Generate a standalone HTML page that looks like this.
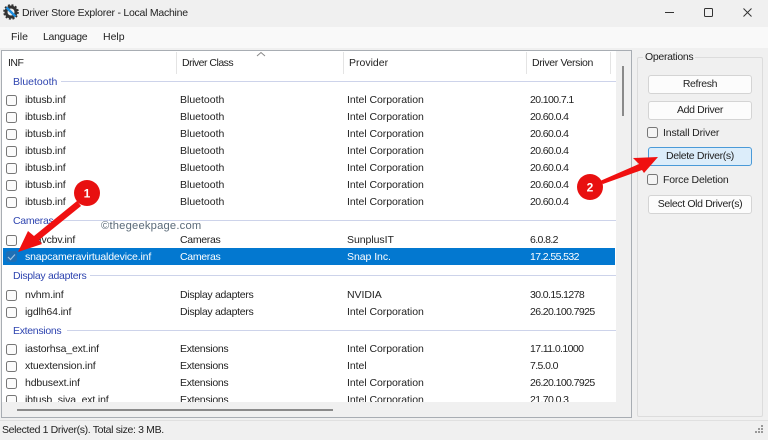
<!DOCTYPE html>
<html><head><meta charset="utf-8"><style>
html,body{margin:0;padding:0}
#p{position:relative;width:768px;height:440px;overflow:hidden;background:#f0f0f0;font:10.5px/14px "Liberation Sans",sans-serif;color:#222;filter:blur(.25px)}
#p div{position:absolute;white-space:nowrap}
.t1{left:25px;letter-spacing:-.15px}.t2{left:180px}.x{letter-spacing:-.3px}.t3{left:347px;letter-spacing:-.05px}.t4{left:530px;letter-spacing:-.6px}
.c{left:6px;width:9px;height:9px;margin-top:1px;border:1px solid #777;border-radius:2.5px;background:#fbfbfb}
.g{color:#2f45b0;left:13px;letter-spacing:-.3px}
.l{height:1px;background:#cdd3ea}
.b{background:#fcfcfc;border:1px solid #d4d4d4;border-radius:3px;text-align:center;box-sizing:border-box;left:648px;width:104px;height:19px;line-height:17px;color:#222;letter-spacing:-.35px}
.hs{width:1px;height:22px;background:#e4e4e4;top:52px}
</style></head><body><div id="p">
<div style="left:0;top:27px;width:768px;height:21px;background:#f9f9f9"></div>
<svg style="position:absolute;left:3px;top:4px" width="16" height="16" viewBox="0 0 16 16"><circle cx="8" cy="8" r="5" fill="none" stroke="#333" stroke-width="3"/><circle cx="8" cy="8" r="7" fill="none" stroke="#333" stroke-width="1.6" stroke-dasharray="2 1.7"/><path d="M3.500 3.500L12.500 12.500" stroke="#1e8fe0" stroke-width="2.400"/></svg>
<div style="left:22px;top:6px;letter-spacing:-.25px">Driver Store Explorer - Local Machine</div>
<div style="left:11px;top:30px">File</div><div style="left:43px;top:30px;letter-spacing:-.3px">Language</div><div style="left:103px;top:30px">Help</div>
<svg style="position:absolute;left:0;top:0" width="768" height="27" fill="none" stroke="#333" stroke-width="1"><path d="M665 12.500H674"/><rect x="704.500" y="8.500" width="8" height="8" rx="1"/><path d="M743.500 8.500L751.500 16.500M751.500 8.500L743.500 16.500"/></svg>

<div style="left:1px;top:50px;width:631px;height:368px;background:#f0f0f0;border:1px solid #a8adb3;box-sizing:border-box"></div>
<div style="left:2px;top:51px;width:614px;height:351px;background:#fff"></div>
<div style="left:8px;top:56px;letter-spacing:-.5px">INF</div><div style="left:182px;top:56px;letter-spacing:-.5px">Driver Class</div><div style="left:349px;top:56px">Provider</div><div style="left:532px;top:56px;letter-spacing:-.35px">Driver Version</div>
<div class="hs" style="left:176px"></div><div class="hs" style="left:343px"></div><div class="hs" style="left:526px"></div><div class="hs" style="left:610px"></div>
<svg style="position:absolute;left:256px;top:51px" width="10" height="6" fill="none" stroke="#888"><path d="M1 5L5 1.500L9 5"/></svg>

<div class="g" style="top:75px;letter-spacing:0">Bluetooth</div><div class="l" style="left:61px;top:81px;width:555px"></div>
<div class="g" style="top:214px">Cameras</div><div class="l" style="left:54px;top:220px;width:562px"></div>
<div class="g" style="top:269px">Display adapters</div><div class="l" style="left:90px;top:275px;width:526px"></div>
<div class="g" style="top:324px">Extensions</div><div class="l" style="left:67px;top:330px;width:549px"></div>

<div class="c" style="top:94px"></div><div class="t1" style="top:93px">ibtusb.inf</div><div class="t2" style="top:93px">Bluetooth</div><div class="t3" style="top:93px">Intel Corporation</div><div class="t4" style="top:93px">20.100.7.1</div>
<div class="c" style="top:111px"></div><div class="t1" style="top:110px">ibtusb.inf</div><div class="t2" style="top:110px">Bluetooth</div><div class="t3" style="top:110px">Intel Corporation</div><div class="t4" style="top:110px">20.60.0.4</div>
<div class="c" style="top:128px"></div><div class="t1" style="top:127px">ibtusb.inf</div><div class="t2" style="top:127px">Bluetooth</div><div class="t3" style="top:127px">Intel Corporation</div><div class="t4" style="top:127px">20.60.0.4</div>
<div class="c" style="top:145px"></div><div class="t1" style="top:144px">ibtusb.inf</div><div class="t2" style="top:144px">Bluetooth</div><div class="t3" style="top:144px">Intel Corporation</div><div class="t4" style="top:144px">20.60.0.4</div>
<div class="c" style="top:162px"></div><div class="t1" style="top:161px">ibtusb.inf</div><div class="t2" style="top:161px">Bluetooth</div><div class="t3" style="top:161px">Intel Corporation</div><div class="t4" style="top:161px">20.60.0.4</div>
<div class="c" style="top:179px"></div><div class="t1" style="top:178px">ibtusb.inf</div><div class="t2" style="top:178px">Bluetooth</div><div class="t3" style="top:178px">Intel Corporation</div><div class="t4" style="top:178px">20.60.0.4</div>
<div class="c" style="top:196px"></div><div class="t1" style="top:195px">ibtusb.inf</div><div class="t2" style="top:195px">Bluetooth</div><div class="t3" style="top:195px">Intel Corporation</div><div class="t4" style="top:195px">20.60.0.4</div>

<div class="c" style="top:234px"></div><div class="t1" style="top:233px">snavcbv.inf</div><div class="t2 x" style="top:233px">Cameras</div><div class="t3" style="top:233px">SunplusIT</div><div class="t4" style="top:233px">6.0.8.2</div>
<div style="left:3px;top:248px;width:612px;height:17px;background:#0378d0"></div>
<div class="c" style="top:250px;background:#1f6fb5;border-color:#1f6fb5"></div>
<svg style="position:absolute;left:7px;top:253px" width="10" height="8" fill="none" stroke="#9cc4e6" stroke-width="1.200"><path d="M1 4L3.500 6.500L8 1.500"/></svg>
<div class="t1" style="top:250px;color:#fff">snapcameravirtualdevice.inf</div><div class="t2 x" style="top:250px;color:#fff">Cameras</div><div class="t3" style="top:250px;color:#fff">Snap Inc.</div><div class="t4" style="top:250px;color:#fff">17.2.55.532</div>

<div class="c" style="top:289px"></div><div class="t1" style="top:288px">nvhm.inf</div><div class="t2 x" style="top:288px">Display adapters</div><div class="t3" style="top:288px">NVIDIA</div><div class="t4" style="top:288px">30.0.15.1278</div>
<div class="c" style="top:306px"></div><div class="t1" style="top:305px">igdlh64.inf</div><div class="t2 x" style="top:305px">Display adapters</div><div class="t3" style="top:305px">Intel Corporation</div><div class="t4" style="top:305px">26.20.100.7925</div>

<div class="c" style="top:343px"></div><div class="t1" style="top:342px">iastorhsa_ext.inf</div><div class="t2 x" style="top:342px">Extensions</div><div class="t3" style="top:342px">Intel Corporation</div><div class="t4" style="top:342px">17.11.0.1000</div>
<div class="c" style="top:360px"></div><div class="t1" style="top:359px">xtuextension.inf</div><div class="t2 x" style="top:359px">Extensions</div><div class="t3" style="top:359px">Intel</div><div class="t4" style="top:359px">7.5.0.0</div>
<div class="c" style="top:377px"></div><div class="t1" style="top:376px">hdbusext.inf</div><div class="t2 x" style="top:376px">Extensions</div><div class="t3" style="top:376px">Intel Corporation</div><div class="t4" style="top:376px">26.20.100.7925</div>
<div style="left:2px;top:391px;width:614px;height:11px;overflow:hidden">
<div class="c" style="left:4px;top:3px"></div><div class="t1" style="left:23px;top:2px">ibtusb_siva_ext.inf</div><div class="t2 x" style="left:178px;top:2px">Extensions</div><div class="t3" style="left:345px;top:2px">Intel Corporation</div><div class="t4" style="left:528px;top:2px">21.70.0.3</div>
</div>

<div style="left:622px;top:66px;width:2px;height:50px;background:#8a8a8a"></div>
<div style="left:17px;top:409px;width:316px;height:2px;background:#8a8a8a"></div>

<div style="left:637px;top:57px;width:126px;height:360px;border:1px solid #dcdcdc;box-sizing:border-box;border-radius:2px"></div>
<div style="left:643px;top:50px;padding:0 2px;background:#f0f0f0;letter-spacing:-.3px">Operations</div>
<div class="b" style="top:75px">Refresh</div>
<div class="b" style="top:101px">Add Driver</div>
<div class="c" style="left:647px;top:126px;background:#f4f4f4"></div><div style="left:663px;top:126px;letter-spacing:-.15px">Install Driver</div>
<div class="b" style="top:147px;background:#dcedfa;border:1px solid #4a9ad8">Delete Driver(s)</div>
<div class="c" style="left:647px;top:173px;background:#f4f4f4"></div><div style="left:663px;top:173px;letter-spacing:-.2px">Force Deletion</div>
<div class="b" style="top:195px">Select Old Driver(s)</div>

<div style="left:0;top:420px;width:768px;height:1px;background:#e0e0e0"></div>
<div style="left:2px;top:423px;letter-spacing:-.35px">Selected 1 Driver(s). Total size: 3 MB.</div>

<div style="left:101px;top:219px;color:#5a6a78;font-size:11.200px;letter-spacing:.2px">©thegeekpage.com</div>

<svg style="position:absolute;left:0;top:0" width="768" height="440">
<path d="M18 252L28 231L34 236L77 201L81 206L39 240L42 244Z" fill="#f01010"/>
<circle cx="87" cy="193" r="13" fill="#e81010"/>
<text x="87" y="197.500" font-family="Liberation Sans" font-size="12" font-weight="bold" fill="#fff" text-anchor="middle">1</text>
<path d="M658 157L633 158L639 164L600 181L603 184L642 170L644 173Z" fill="#f01010"/>
<circle cx="590" cy="187" r="13" fill="#e81010"/>
<text x="590" y="191.500" font-family="Liberation Sans" font-size="12" font-weight="bold" fill="#fff" text-anchor="middle">2</text>
</svg>
<svg style="position:absolute;left:752px;top:424px" width="14" height="14" fill="#999"><rect x="9" y="1" width="2" height="2"/><rect x="6" y="4" width="2" height="2"/><rect x="9" y="4" width="2" height="2"/><rect x="3" y="7" width="2" height="2"/><rect x="6" y="7" width="2" height="2"/><rect x="9" y="7" width="2" height="2"/></svg>
</div></body></html>
